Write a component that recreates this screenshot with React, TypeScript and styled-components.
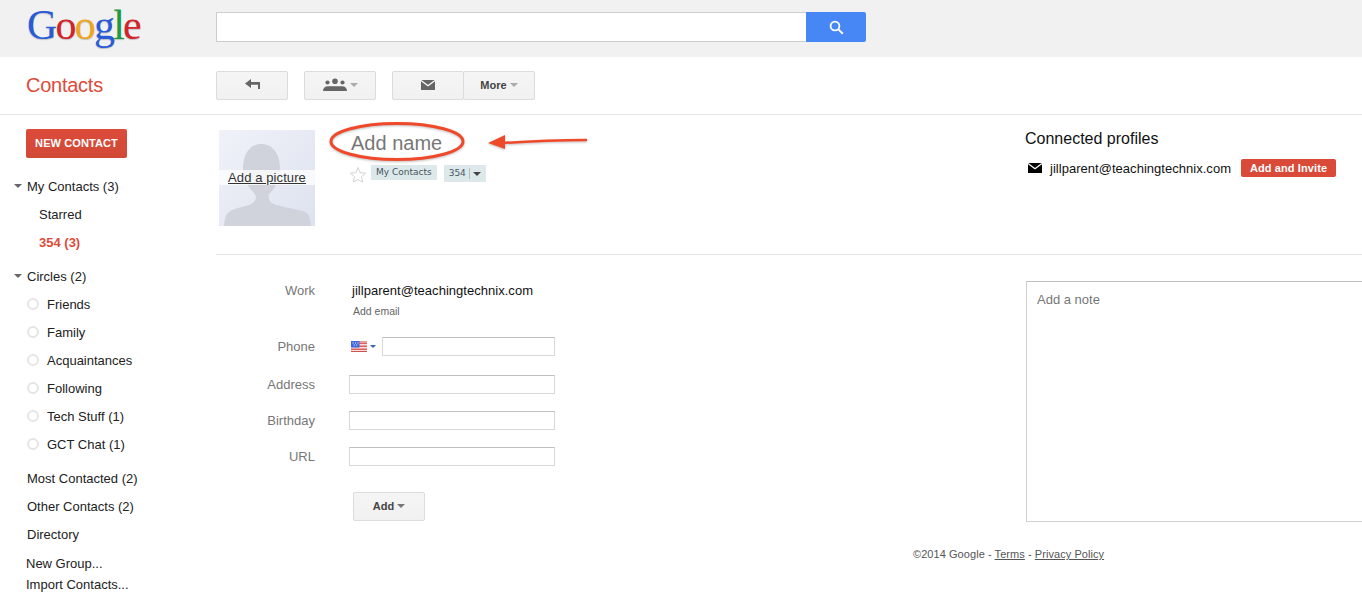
import React from "react";
import styled, { createGlobalStyle } from "styled-components";

const Global = createGlobalStyle`
  html, body { margin: 0; padding: 0; height: 612px; overflow: hidden; background: #fff; }
  body { font-family: "Liberation Sans", Arial, sans-serif; color: #222; font-size: 13px; }
  * { box-sizing: border-box; }
`;

const Page = styled.div`
  position: relative;
  width: 1362px;
  height: 612px;
  overflow: hidden;
`;

const Header = styled.header`
  height: 57px;
  background: #f1f1f1;
  display: flex;
  align-items: flex-start;
`;

const Logo = styled.div`
  width: 216px;
  padding: 0 0 0 27px;
  font-family: "Liberation Serif", serif;
  font-size: 42px;
  line-height: 50px;
  letter-spacing: -1.8px;
  text-shadow: 0 1px 1px rgba(0, 0, 0, 0.2);
`;

const LogoLetter = styled.span<{ $c: string }>`
  color: ${(p) => p.$c};
`;

const SearchInput = styled.div`
  margin-top: 12px;
  width: 590px;
  height: 30px;
  background: #fff;
  border: 1px solid #cdcdcd;
  border-right: 0;
`;

const SearchButton = styled.button`
  margin-top: 12px;
  width: 60px;
  height: 30px;
  border: 0;
  padding: 0;
  background: #4787f5;
  border-radius: 0 2px 2px 0;
  display: flex;
  align-items: center;
  justify-content: center;
`;

const ActionBar = styled.div`
  height: 58px;
  border-bottom: 1px solid #e5e5e5;
  display: flex;
  align-items: flex-start;
`;

const AppTitle = styled.div`
  width: 216px;
  padding: 16px 0 0 26px;
  font-size: 20px;
  line-height: 24px;
  letter-spacing: -0.25px;
  color: #dd4b39;
`;

const ToolGroup = styled.div<{ $gap?: number }>`
  margin-top: 14px;
  margin-right: ${(p) => p.$gap ?? 16}px;
  display: flex;
  height: 29px;
`;

const ToolButton = styled.div<{ $w: number; $joined?: boolean }>`
  width: ${(p) => p.$w}px;
  height: 29px;
  padding-bottom: 2px;
  display: flex;
  align-items: center;
  justify-content: center;
  gap: 3px;
  background: linear-gradient(#f5f5f5, #f1f1f1);
  border: 1px solid #dcdcdc;
  border-radius: 2px;
  font-size: 11px;
  font-weight: bold;
  letter-spacing: 0.05px;
  color: #444;
  margin-left: ${(p) => (p.$joined ? "-1px" : "0")};
`;

const Caret = styled.span<{ $c?: string }>`
  display: inline-block;
  width: 0;
  height: 0;
  border-left: 4px solid transparent;
  border-right: 4px solid transparent;
  border-top: 4px solid ${(p) => p.$c ?? "#aaa"};
`;

const SmallCaret = styled(Caret)`
  border-left-width: 3px;
  border-right-width: 3px;
  border-top-width: 3px;
`;

const Body = styled.div`
  display: flex;
  height: 497px;
`;

const Sidebar = styled.nav`
  width: 216px;
  flex: none;
  padding-top: 14px;
`;

const NewButton = styled.div`
  margin-left: 26px;
  width: 101px;
  height: 29px;
  padding-bottom: 2px;
  background: linear-gradient(#dd4b39, #d14836);
  border-radius: 2px;
  color: #fff;
  font-size: 11px;
  font-weight: bold;
  letter-spacing: 0.1px;
  display: flex;
  align-items: center;
  justify-content: center;
  margin-bottom: 14px;
`;

const NavRow = styled.div<{ $indent: number; $active?: boolean; $mt?: number; $h?: number }>`
  height: ${(p) => p.$h ?? 28}px;
  display: flex;
  align-items: center;
  padding-left: ${(p) => p.$indent}px;
  margin-top: ${(p) => p.$mt ?? 0}px;
  font-size: 13px;
  color: ${(p) => (p.$active ? "#dd4b39" : "#222")};
  font-weight: ${(p) => (p.$active ? "bold" : "normal")};
`;

const NavCaret = styled.span`
  width: 0;
  height: 0;
  margin-right: 5px;
  border-left: 4px solid transparent;
  border-right: 4px solid transparent;
  border-top: 4px solid #666;
`;

const CircleDot = styled.span`
  width: 12px;
  height: 12px;
  margin-right: 8px;
  border: 2px solid #e5e5e5;
  border-radius: 50%;
`;

const Main = styled.main`
  flex: 1;
  min-width: 0;
`;

const Top = styled.section`
  height: 140px;
  border-bottom: 1px solid #e5e5e5;
  display: flex;
  align-items: flex-start;
`;

const PhotoBox = styled.div`
  position: relative;
  margin: 15px 0 0 3px;
  width: 96px;
  height: 96px;
  flex: none;
  overflow: hidden;
  background: linear-gradient(135deg, #f0f2f8, #dde2ef);
`;

const PhotoLabel = styled.div`
  position: absolute;
  left: 0;
  right: 0;
  top: 40px;
  height: 15px;
  background: rgba(255, 255, 255, 0.75);
  text-align: center;
  font-size: 13px;
  line-height: 15px;
  letter-spacing: 0.1px;
  color: #333;
  text-decoration: underline;
`;

const NameCol = styled.div`
  margin-left: 36px;
  width: 674px;
  padding-top: 15px;
`;

const NameText = styled.div`
  font-size: 20px;
  line-height: 27px;
  color: #777;
`;

const Tags = styled.div`
  margin-top: 8px;
  display: flex;
  align-items: flex-start;
  margin-left: -2px;
`;

const StarIcon = styled.svg`
  margin-top: 1px;
`;

const Tag = styled.div`
  height: 15px;
  margin-left: 4px;
  padding: 0 5px;
  background: #dde8ea;
  font-family: "DejaVu Sans", sans-serif;
  font-size: 9px;
  line-height: 15px;
  color: #46565f;
  display: flex;
  align-items: center;
`;

const TagMenu = styled(Tag)`
  height: 17px;
  margin-left: 7px;
  padding: 0 5px 0 5px;
  gap: 3px;
`;

const TagDivider = styled.span`
  width: 1px;
  height: 11px;
  background: #b5bfc0;
`;

const Connected = styled.div`
  padding-top: 15px;
  width: 320px;
`;

const ConnectedTitle = styled.div`
  font-size: 16px;
  line-height: 18px;
  color: #111;
`;

const ConnectedRow = styled.div`
  margin-top: 11px;
  display: flex;
  align-items: center;
  padding-left: 3px;
  font-size: 13px;
  letter-spacing: 0.03px;
  color: #111;
`;

const ConnectedMail = styled.span`
  margin-left: 8px;
`;

const InviteButton = styled.div`
  margin-left: 10px;
  width: 95px;
  height: 18px;
  background: #d94a38;
  border-radius: 2px;
  color: #fff;
  font-size: 11px;
  font-weight: bold;
  letter-spacing: 0.1px;
  display: flex;
  align-items: center;
  justify-content: center;
`;

const Lower = styled.section`
  display: flex;
  align-items: flex-start;
`;

const Form = styled.div`
  width: 810px;
  flex: none;
  padding-top: 25px;
`;

const FormRow = styled.div<{ $mb: number }>`
  display: flex;
  align-items: center;
  height: 20px;
  margin-bottom: ${(p) => p.$mb}px;
`;

const Label = styled.div`
  width: 99px;
  text-align: right;
  font-size: 13px;
  color: #777;
  flex: none;
`;

const Value = styled.div`
  margin-left: 37px;
  font-size: 13px;
  letter-spacing: 0.03px;
  color: #111;
`;

const AddEmail = styled.div`
  margin: 0 0 19px 137px;
  font-size: 10.5px;
  line-height: 12px;
  color: #666;
`;

const FieldWrap = styled.div`
  margin-left: 34px;
  display: flex;
  align-items: center;
`;

const Field = styled.div<{ $w: number }>`
  width: ${(p) => p.$w}px;
  height: 19px;
  background: #fff;
  border: 1px solid #d9d9d9;
  border-top-color: #c0c0c0;
`;

const FlagBox = styled.div`
  display: flex;
  align-items: center;
  gap: 3px;
  margin: 0 6px 0 2px;
`;

const AddButton = styled(ToolButton)`
  margin: 26px 0 0 137px;
`;

const NoteCol = styled.div`
  flex: 1;
  min-width: 0;
  padding-top: 26px;
`;

const NoteBox = styled.div`
  width: 346px;
  height: 241px;
  border: 1px solid #d0d0d0;
  border-top-color: #c0c0c0;
  padding: 10px;
  font-size: 13px;
  line-height: 15px;
  color: #777;
`;

const Legal = styled.div`
  margin: 26px 0 0 -113px;
  font-size: 11px;
  line-height: 13px;
  letter-spacing: 0.06px;
  color: #555;
`;

const LegalLink = styled.span`
  text-decoration: underline;
  color: #555;
`;

const Annotation = styled.svg`
  position: absolute;
  left: 320px;
  top: 118px;
  pointer-events: none;
  filter: drop-shadow(0 1px 1px rgba(0, 0, 0, 0.25));
`;

const Row = ({ label, mb }: { label: string; mb: number }) => (
  <FormRow $mb={mb}>
    <Label>{label}</Label>
    <FieldWrap>
      <Field $w={206} />
    </FieldWrap>
  </FormRow>
);

const Mail = ({ fill, w, h }: { fill: string; w: number; h: number }) => (
  <svg width={w} height={h} viewBox="0 0 14 10">
    <path d="M0 0h14v10H0z" fill={fill} />
    <path d="M0 .5l7 5.2 7-5.2" fill="none" stroke="#fff" strokeWidth="1.3" />
  </svg>
);

const circles = ["Friends", "Family", "Acquaintances", "Following", "Tech Stuff (1)", "GCT Chat (1)"];

export default function App() {
  return (
    <Page>
      <Global />
      <Header>
        <Logo>
          <LogoLetter $c="#2a5bd7">G</LogoLetter>
          <LogoLetter $c="#d3232b">o</LogoLetter>
          <LogoLetter $c="#f0a51c">o</LogoLetter>
          <LogoLetter $c="#2a5bd7">g</LogoLetter>
          <LogoLetter $c="#1c9a3c">l</LogoLetter>
          <LogoLetter $c="#d3232b">e</LogoLetter>
        </Logo>
        <SearchInput />
        <SearchButton aria-label="Search">
          <svg width="15" height="15" viewBox="0 0 15 15">
            <circle cx="6" cy="6" r="4.4" fill="none" stroke="#fff" strokeWidth="1.8" />
            <path d="M9.4 9.4l4.4 4.4" stroke="#fff" strokeWidth="2" />
          </svg>
        </SearchButton>
      </Header>

      <ActionBar>
        <AppTitle>Contacts</AppTitle>
        <ToolGroup>
          <ToolButton $w={72}>
            <svg width="15" height="11" viewBox="0 0 15 11">
              <path d="M0 4.500L6 0v3h9v7h-2V5.800H6V9z" fill="#666" />
            </svg>
          </ToolButton>
        </ToolGroup>
        <ToolGroup>
          <ToolButton $w={72}>
            <svg width="24" height="13" viewBox="0 0 24 13">
              <circle cx="4.500" cy="4.500" r="2.100" fill="#666" />
              <circle cx="12" cy="3.200" r="2.800" fill="#666" />
              <circle cx="19.500" cy="4.500" r="2.100" fill="#666" />
              <path d="M0 13c0-3 2-4.800 5-4.800h14c3 0 5 1.800 5 4.800z" fill="#666" />
            </svg>
            <Caret />
          </ToolButton>
        </ToolGroup>
        <ToolGroup>
          <ToolButton $w={72}>
            <Mail fill="#666" w={14} h={10} />
          </ToolButton>
          <ToolButton $w={72} $joined>
            More <Caret />
          </ToolButton>
        </ToolGroup>
      </ActionBar>

      <Body>
        <Sidebar>
          <NewButton>NEW CONTACT</NewButton>
          <NavRow $indent={14}>
            <NavCaret />My Contacts (3)
          </NavRow>
          <NavRow $indent={39}>Starred</NavRow>
          <NavRow $indent={39} $active>354 (3)</NavRow>
          <NavRow $indent={14} $mt={6}>
            <NavCaret />Circles (2)
          </NavRow>
          {circles.map((c) => (
            <NavRow $indent={27} key={c}>
              <CircleDot />{c}
            </NavRow>
          ))}
          <NavRow $indent={27} $mt={6}>Most Contacted (2)</NavRow>
          <NavRow $indent={27}>Other Contacts (2)</NavRow>
          <NavRow $indent={27}>Directory</NavRow>
          <NavRow $indent={26} $mt={5} $h={21}>New Group...</NavRow>
          <NavRow $indent={26} $h={21}>Import Contacts...</NavRow>
        </Sidebar>

        <Main>
          <Top>
            <PhotoBox>
              <svg width="96" height="96" viewBox="0 0 96 96">
                <path
                  d="M42 14c12 0 19 10 19 24 0 12-6 22-11 26-1 6 1 9 8 11 12 4 26 4 31 9 2 3 2 8 3 12H5c1-6 1-11 5-14 6-5 20-5 25-10 3-3 2-6 0-9-6-6-11-15-11-25 0-14 7-24 18-24z"
                  fill="#d0d3dc"
                />
              </svg>
              <PhotoLabel>Add a picture</PhotoLabel>
            </PhotoBox>
            <NameCol>
              <NameText>Add name</NameText>
              <Tags>
                <StarIcon width="18" height="18" viewBox="0 0 18 18">
                  <path d="M9 1.500l2.100 5.200 5.500.4-4.200 3.600 1.300 5.400L9 13.700l-4.700 2.400 1.300-5.400L1.400 7.100l5.500-.4z" fill="none" stroke="#d4d4d4" />
                </StarIcon>
                <Tag>My Contacts</Tag>
                <TagMenu>
                  354
                  <TagDivider />
                  <Caret $c="#444" />
                </TagMenu>
              </Tags>
            </NameCol>
            <Connected>
              <ConnectedTitle>Connected profiles</ConnectedTitle>
              <ConnectedRow>
                <Mail fill="#000" w={14} h={10} />
                <ConnectedMail>jillparent@teachingtechnix.com</ConnectedMail>
                <InviteButton>Add and Invite</InviteButton>
              </ConnectedRow>
            </Connected>
          </Top>
          <Lower>
            <Form>
              <FormRow $mb={5}>
                <Label>Work</Label>
                <Value>jillparent@teachingtechnix.com</Value>
              </FormRow>
              <AddEmail>Add email</AddEmail>
              <FormRow $mb={18}>
                <Label>Phone</Label>
                <FieldWrap>
                  <FlagBox>
                    <svg width="16" height="11" viewBox="0 0 16 11">
                      <path d="M0 0h16v11H0z" fill="#f6dede" />
                      <path d="M0 1.500h16v1.500H0zM0 4.500h16V6H0zM0 7.500h16V9H0z" fill="#e0605a" />
                      <path d="M0 0h16M0 10.500h16" stroke="#c9564f" />
                      <path d="M0 0h8.500v6.500H0z" fill="#3b68dc" />
                      <path d="M1.500 1.500h1v1h-1zM4 1.500h1v1H4zM6.500 1.500h1v1h-1zM2.700 3.500h1v1h-1zM5.200 3.500h1v1h-1z" fill="#fff" />
                    </svg>
                    <SmallCaret $c="#3a5fb0" />
                  </FlagBox>
                  <Field $w={173} />
                </FieldWrap>
              </FormRow>
              <Row label="Address" mb={16} />
              <Row label="Birthday" mb={16} />
              <Row label="URL" mb={16} />
              <AddButton $w={72}>
                Add <Caret $c="#777" />
              </AddButton>
            </Form>
            <NoteCol>
              <NoteBox>Add a note</NoteBox>
              <Legal>
                ©2014 Google - <LegalLink>Terms</LegalLink> - <LegalLink>Privacy Policy</LegalLink>
              </Legal>
            </NoteCol>
          </Lower>
        </Main>
      </Body>

      <Annotation width="280" height="60" viewBox="0 0 280 60">
        <ellipse cx="77" cy="23.500" rx="66" ry="18" fill="none" stroke="#f0492a" strokeWidth="3" />
        <path d="M183 25c30-2 56-3 84-3" stroke="#f0492a" strokeWidth="2.600" fill="none" />
        <path d="M168 25l17-8v14z" fill="#f0492a" />
      </Annotation>
    </Page>
  );
}
